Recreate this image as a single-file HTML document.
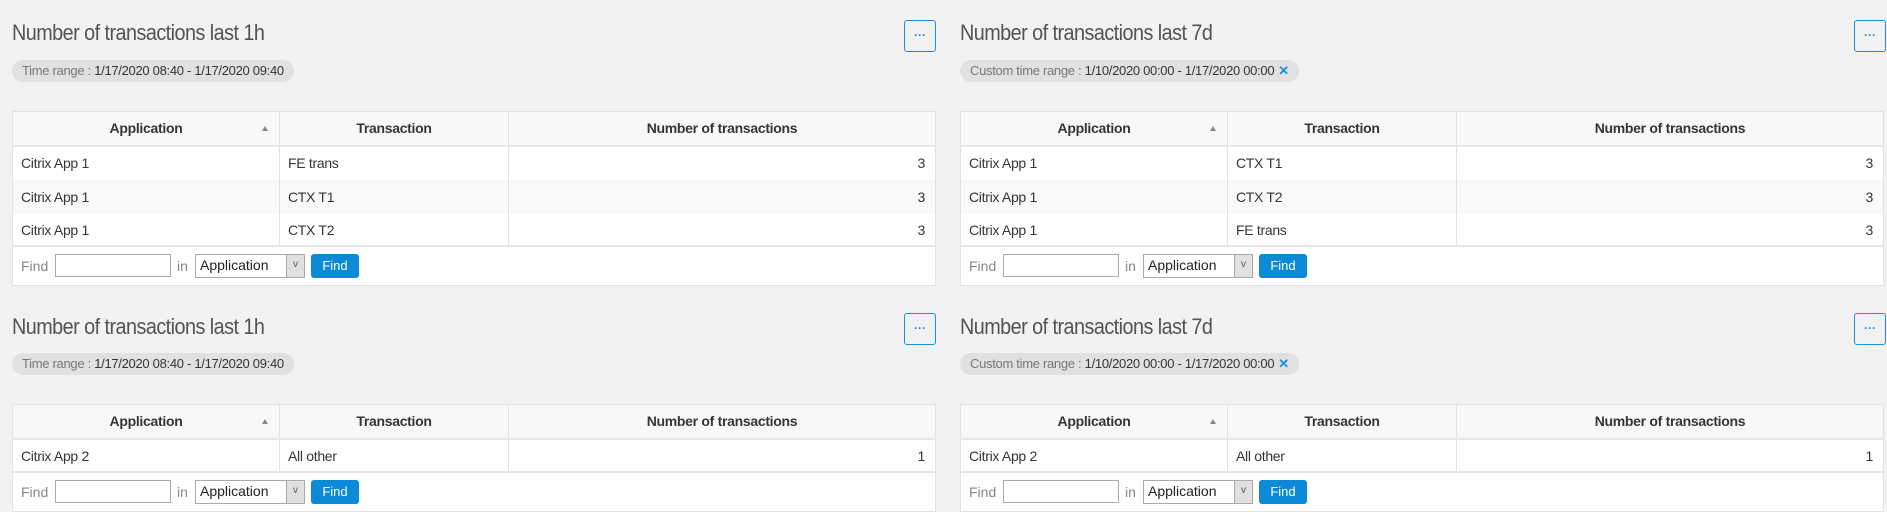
<!DOCTYPE html>
<html><head><meta charset="utf-8"><style>
*{box-sizing:border-box;margin:0;padding:0}
body{width:1887px;height:510px;background:#f2f2f2;font-family:"Liberation Sans",sans-serif;color:#353535;overflow:hidden;position:relative}
.p{position:absolute;width:924px}
.t{position:absolute;left:0;top:0;font-size:22px;color:#525353;letter-spacing:-0.6px;transform:scaleX(0.9);transform-origin:left}
.b{position:absolute;left:892px;width:32px;height:32px;border:1px solid #1a8fe0;border-radius:3px;color:#1a8fe0;font-size:12px;font-weight:bold;text-align:center;line-height:29px}
.pill{position:absolute;left:0;height:22px;border-radius:11px;background:#e1e1e1;font-size:13px;line-height:22px;padding:0 10px;white-space:nowrap;letter-spacing:-0.3px}
.pill .g{color:#777}
.pill .x{color:#1a8fe0;font-weight:bold;margin-left:4px}
table{position:absolute;left:0;width:924px;border-collapse:collapse;background:#fff;font-size:14px;letter-spacing:-0.3px;border:1px solid #e2e2e2}
td,th{border-left:1px solid #e2e2e2;border-right:1px solid #e2e2e2;height:34px;padding:0 8px}
th{background:#f8f8f8;font-weight:bold;height:34px;position:relative;border-bottom:2px solid #e6e6e6}
tr.a td{background:#f9f9f9}
td.n{text-align:right;padding-right:10px}
th .s{position:absolute;right:11px;top:14px;width:0;height:0;border-left:3px solid transparent;border-right:3px solid transparent;border-bottom:5px solid #888}
.f{height:41px;border:1px solid #e2e2e2;border-top:2px solid #e6e6e6;background:#fff;position:absolute;left:0;width:924px;font-size:14px}
.f span{position:absolute;top:11px;color:#888}
.in{position:absolute;left:42px;top:7px;width:116px;height:23px;border:1px solid #aaa;background:#fff}
.sel{position:absolute;left:182px;top:7px;width:110px;height:24px;border:1px solid #aaa;background:#fff;color:#222;padding:2px 4px}
.sel i{position:absolute;right:0;top:0;width:18px;height:22px;background:#e0e0e0;border-left:1px solid #aaa;font-style:normal;font-size:10px;text-align:center;line-height:20px;color:#555}
.fb{position:absolute;left:298px;top:7px;width:48px;height:24px;background:#0b8ad8;border-radius:3px;color:#fff;text-align:center;line-height:24px;font-size:13px}
</style></head><body>

<div class="p" style="left:12px;top:0">
<div class="t" style="top:20px">Number of transactions last 1h</div>
<div class="b" style="top:20px">···</div>
<div class="pill" style="top:60px"><span class="g">Time range : </span>1/17/2020 08:40 - 1/17/2020 09:40</div>
<table style="top:111px">
<tr><th style="width:267px">Application<span class="s"></span></th><th style="width:229px">Transaction</th><th>Number of transactions</th></tr>
<tr><td>Citrix App 1</td><td>FE trans</td><td class="n">3</td></tr>
<tr class="a"><td>Citrix App 1</td><td>CTX T1</td><td class="n">3</td></tr>
<tr><td>Citrix App 1</td><td>CTX T2</td><td class="n">3</td></tr>
</table>
<div class="f" style="top:245px"><span style="left:8px">Find</span><div class="in"></div><span style="left:164px">in</span><div class="sel">Application<i>v</i></div><div class="fb">Find</div></div>
</div>

<div class="p" style="left:960px;top:0">
<div class="t" style="top:20px">Number of transactions last 7d</div>
<div class="b" style="top:20px;left:894px">···</div>
<div class="pill" style="top:60px"><span class="g">Custom time range : </span>1/10/2020 00:00 - 1/17/2020 00:00<span class="x">✕</span></div>
<table style="top:111px">
<tr><th style="width:267px">Application<span class="s"></span></th><th style="width:229px">Transaction</th><th>Number of transactions</th></tr>
<tr><td>Citrix App 1</td><td>CTX T1</td><td class="n">3</td></tr>
<tr class="a"><td>Citrix App 1</td><td>CTX T2</td><td class="n">3</td></tr>
<tr><td>Citrix App 1</td><td>FE trans</td><td class="n">3</td></tr>
</table>
<div class="f" style="top:245px"><span style="left:8px">Find</span><div class="in"></div><span style="left:164px">in</span><div class="sel">Application<i>v</i></div><div class="fb">Find</div></div>
</div>

<div class="p" style="left:12px;top:292px">
<div class="t" style="top:22px">Number of transactions last 1h</div>
<div class="b" style="top:21px">···</div>
<div class="pill" style="top:61px"><span class="g">Time range : </span>1/17/2020 08:40 - 1/17/2020 09:40</div>
<table style="top:112px">
<tr><th style="width:267px">Application<span class="s"></span></th><th style="width:229px">Transaction</th><th>Number of transactions</th></tr>
<tr><td>Citrix App 2</td><td>All other</td><td class="n">1</td></tr>
</table>
<div class="f" style="top:179px"><span style="left:8px">Find</span><div class="in"></div><span style="left:164px">in</span><div class="sel">Application<i>v</i></div><div class="fb">Find</div></div>
</div>

<div class="p" style="left:960px;top:292px">
<div class="t" style="top:22px">Number of transactions last 7d</div>
<div class="b" style="top:21px;left:894px">···</div>
<div class="pill" style="top:61px"><span class="g">Custom time range : </span>1/10/2020 00:00 - 1/17/2020 00:00<span class="x">✕</span></div>
<table style="top:112px">
<tr><th style="width:267px">Application<span class="s"></span></th><th style="width:229px">Transaction</th><th>Number of transactions</th></tr>
<tr><td>Citrix App 2</td><td>All other</td><td class="n">1</td></tr>
</table>
<div class="f" style="top:179px"><span style="left:8px">Find</span><div class="in"></div><span style="left:164px">in</span><div class="sel">Application<i>v</i></div><div class="fb">Find</div></div>
</div>

</body></html>
